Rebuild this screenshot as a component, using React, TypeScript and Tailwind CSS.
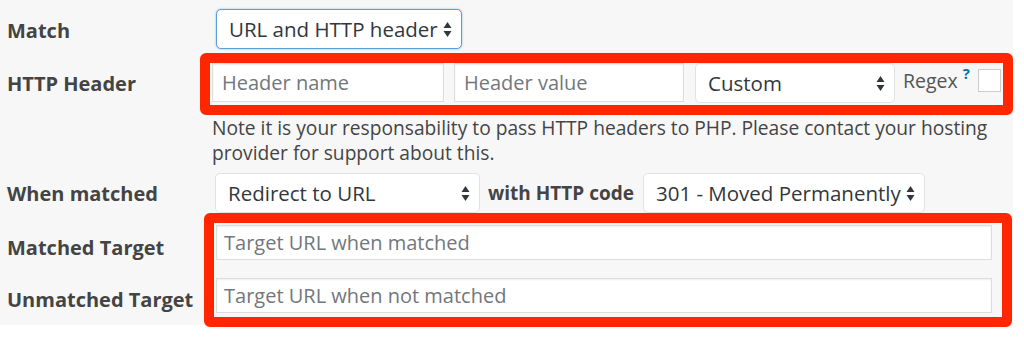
import React from "react";

const font = { fontFamily: '"Open Sans", "Liberation Sans", sans-serif' };

function Arrows() {
  return (
    <svg width="9" height="17" viewBox="0 0 9 17" className="shrink-0">
      <path d="M4.5 1 L8.5 7 L0.5 7 Z" fill="#32373c" />
      <path d="M4.5 16 L8.5 10 L0.5 10 Z" fill="#32373c" />
    </svg>
  );
}

function Select({ label, w, focus }: { label: string; w: string; focus?: boolean }) {
  return (
    <div
      className={`${w} h-[40px] shrink-0 flex items-center justify-between pl-[12px] pr-[9px] bg-white rounded-[5px] text-[20.5px] text-[#32373c] ${
        focus ? "border border-[#5b9dd9] shadow-[0_0_2px_rgba(30,140,190,0.6)]" : "border border-[#e2e2e2]"
      }`}
    >
      <span className="whitespace-nowrap">{label}</span>
      <Arrows />
    </div>
  );
}

function Input({ ph, w, h, pl }: { ph: string; w: string; h: string; pl: string }) {
  return (
    <div
      className={`${w} ${h} ${pl} shrink-0 flex items-center bg-white border border-[#dddddd] shadow-[inset_0_1px_2px_rgba(0,0,0,0.07)] text-[20px] text-[#72777c] whitespace-nowrap`}
    >
      {ph}
    </div>
  );
}

function Label({ children }: { children: React.ReactNode }) {
  return <span className="text-[20px] font-bold text-[#444] whitespace-nowrap leading-[24px]">{children}</span>;
}

export default function App() {
  return (
    <div className="w-[1024px] h-[337px] bg-white" style={font}>
      <div className="w-[1013px] h-[325px] bg-[#f7f7f7] pt-[9px] flex flex-col">
        {/* Match */}
        <div className="flex items-center h-[40px]">
          <div className="w-[216px] pl-[7px] pt-[4px]">
            <Label>Match</Label>
          </div>
          <Select label="URL and HTTP header" w="w-[246px]" focus />
        </div>

        {/* HTTP Header */}
        <div className="flex items-center mt-[4px]">
          <div className="w-[203px] pl-[7px]">
            <Label>HTTP Header</Label>
          </div>
          <div className="w-[813px] h-[62px] shrink-0 border-[10px] border-[#ff2600] rounded-[6px] flex items-start pl-[2px] pb-[3px]">
            <Input ph="Header name" w="w-[232px]" h="h-[39px]" pl="pl-[9px]" />
            <div className="ml-[10px]">
              <Input ph="Header value" w="w-[230px]" h="h-[39px]" pl="pl-[9px]" />
            </div>
            <div className="ml-[11px]">
              <Select label="Custom" w="w-[200px]" />
            </div>
            <div className="ml-[8px] flex items-start pt-[3px]">
              <span className="text-[19.5px] text-[#555]">Regex</span>
              <span className="ml-[5px] -mt-[4px] text-[15px] font-bold text-[#0073aa]">?</span>
              <span className="ml-[8px] mt-[3px] w-[23px] h-[23px] bg-white border border-[#cccccc]" />
            </div>
          </div>
        </div>

        {/* Note */}
        <div className="pl-[212px] text-[19.2px] leading-[25px] text-[#444]">
          <div className="whitespace-nowrap">
            Note it is your responsability to pass HTTP headers to PHP. Please contact your hosting
          </div>
          <div className="whitespace-nowrap">provider for support about this.</div>
        </div>

        {/* When matched */}
        <div className="flex items-center mt-[8px] h-[40px]">
          <div className="w-[215px] pl-[7px] pt-[3px]">
            <Label>When matched</Label>
          </div>
          <Select label="Redirect to URL" w="w-[265px]" />
          <span className="ml-[8px] mr-[9px] text-[19px] font-bold text-[#444] whitespace-nowrap">with HTTP code</span>
          <Select label="301 - Moved Permanently" w="w-[282px]" />
        </div>

        {/* Targets */}
        <div className="flex">
          <div className="w-[204px] pl-[7px] pt-[23px] flex flex-col gap-[28px]">
            <Label>Matched Target</Label>
            <Label>Unmatched Target</Label>
          </div>
          <div className="w-[808px] h-[114px] shrink-0 border-[10px] border-[#ff2600] rounded-[6px] pl-[2px] pt-[2px] flex flex-col gap-[18px]">
            <Input ph="Target URL when matched" w="w-[776px]" h="h-[35px]" pl="pl-[7px]" />
            <Input ph="Target URL when not matched" w="w-[776px]" h="h-[35px]" pl="pl-[7px]" />
          </div>
        </div>
      </div>
    </div>
  );
}
